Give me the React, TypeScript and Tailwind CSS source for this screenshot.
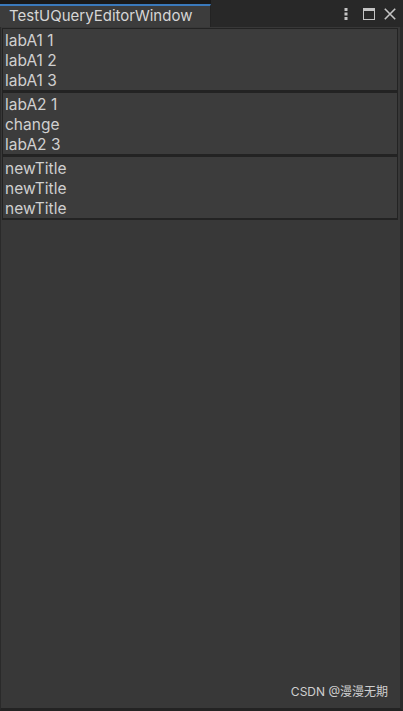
import React from "react";

const Box = ({ items }: { items: string[] }) => (
  <div className="ml-[1px] mr-[2px] pt-[1px] border-x border-t border-b-2 border-[#232323] bg-[#3c3c3c]">
    {items.map((t, i) => (
      <div key={i} className="h-[20px] pl-[2px] text-[15.5px] leading-[22px] text-[#d0d0d0]">
        {t}
      </div>
    ))}
  </div>
);

export default function App() {
  return (
    <div
      className="w-[403px] h-[711px] bg-[#191919] flex flex-col overflow-hidden"
      style={{ fontFamily: "Inter, 'Noto Sans CJK SC', sans-serif" }}
    >
      <div className="h-[27px] flex bg-[#282828] shrink-0">
        <div className="w-[211px] flex flex-col bg-[#191919]">
          <div className="h-[4px]" />
          <div className="flex-1 border-t-2 border-[#3a79bb] bg-[#3c3c3c] border-r border-r-[#232323] pl-[9px] text-[15px] leading-[20px] text-[#d6d6d6]">
            TestUQueryEditorWindow
          </div>
        </div>
        <div className="flex-1 flex items-center justify-end pr-[7px]">
          <svg width="4" height="12" viewBox="0 0 4 12" className="mr-[15px]">
            <rect x="0.5" y="0" width="3" height="3" fill="#c4c4c4" />
            <rect x="0.5" y="4.5" width="3" height="3" fill="#c4c4c4" />
            <rect x="0.5" y="9" width="3" height="3" fill="#c4c4c4" />
          </svg>
          <svg width="12" height="12" viewBox="0 0 12 12" className="mr-[9px]">
            <rect x="0.5" y="0.5" width="11" height="11" fill="none" stroke="#c4c4c4" strokeWidth="1" />
            <rect x="0" y="0" width="12" height="3" fill="#c4c4c4" />
          </svg>
          <svg width="12" height="12" viewBox="0 0 12 12">
            <path d="M0.8 0.8 L11.2 11.2 M11.2 0.8 L0.8 11.2" stroke="#c4c4c4" strokeWidth="1.6" />
          </svg>
        </div>
      </div>
      <div className="flex-1 relative bg-[#383838] border-l border-l-[#2a2a2a] border-r-[3px] border-r-[#2a2a2a] border-b-[3px] border-b-[#232323] pt-[1px]">
        <Box items={["labA1 1", "labA1 2", "labA1 3"]} />
        <Box items={["labA2 1", "change", "labA2 3"]} />
        <Box items={["newTitle", "newTitle", "newTitle"]} />
        <div className="absolute right-[12px] bottom-[7px] text-[12px] text-[#cfcfcf]">
          CSDN @漫漫无期
        </div>
      </div>
    </div>
  );
}
